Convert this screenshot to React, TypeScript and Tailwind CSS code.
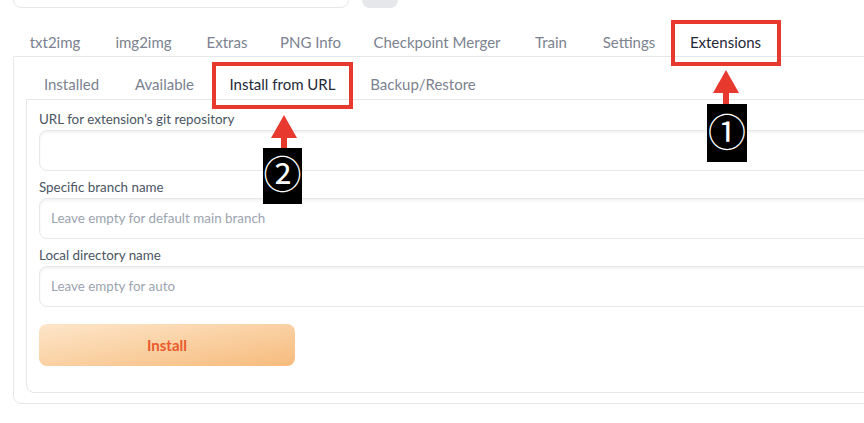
import React from "react";

const topTabs = [
  { label: "txt2img", w: "w-[84px]" },
  { label: "img2img", w: "w-[93px]" },
  { label: "Extras", w: "w-[74px]" },
  { label: "PNG Info", w: "w-[93px]" },
  { label: "Checkpoint Merger", w: "w-[160px]" },
  { label: "Train", w: "w-[68px]" },
  { label: "Settings", w: "w-[88px]" },
  { label: "Extensions", w: "w-[105px]", active: true },
];

const subTabs = [
  { label: "Installed", w: "w-[91px]" },
  { label: "Available", w: "w-[95px]" },
  { label: "Install from URL", w: "w-[141px]", active: true },
  { label: "Backup/Restore", w: "w-[140px]" },
];

const Field: React.FC<{ label: string; placeholder?: string; first?: boolean }> = (
  { label, placeholder, first },
) => (
  <div className={`flex flex-col gap-[1px] ${first ? "" : "mt-[6px]"}`}>
    <span className="text-[13.4px] leading-[20px] text-[#4b5563]">{label}</span>
    <div className="h-[41px] rounded-lg border border-[#e5e7eb] bg-white shadow-[inset_0_2px_3px_rgba(0,0,0,0.05)] flex items-center px-[11px]">
      {placeholder && (
        <span className="text-[13.4px] text-[#9ca3af]">{placeholder}</span>
      )}
    </div>
  </div>
);

const Arrow: React.FC = () => (
  <div className="flex flex-col items-center">
    <div className="w-0 h-0 border-l-[13px] border-r-[13px] border-b-[23px] border-l-transparent border-r-transparent border-b-[#e8392f]" />
    <div className="w-[6px] h-[11px] bg-[#e8392f]" />
  </div>
);

const Badge: React.FC<{ glyph: string }> = ({ glyph }) => (
  <span
    className="text-white text-[38px] leading-[44px]"
    style={{ fontFamily: "'Noto Sans CJK JP', sans-serif" }}
  >
    {glyph}
  </span>
);

export default function App() {
  return (
    <div
      className="relative w-[864px] h-[423px] overflow-hidden bg-white"
      style={{ fontFamily: "Lato, 'Noto Sans', sans-serif" }}
    >
      <div className="w-[920px]">
        {/* top bar remnant */}
        <div className="h-[8px] overflow-hidden flex items-end gap-[13px] pl-[13px]">
          <div className="w-[336px] h-[30px] rounded-lg border border-[#e5e7eb] bg-white shrink-0" />
          <div className="w-[36px] h-[30px] rounded-lg bg-[#e5e7eb] shrink-0" />
        </div>

        {/* top tabs */}
        <div className="h-[48px] flex items-end pl-[13px]">
          {topTabs.map((t) => (
            <div
              key={t.label}
              className={`${t.w} text-center text-[15px] leading-[22px] pb-[3px] ${t.active ? "text-[#1f2937]" : "text-[#7b8290]"}`}
            >
              {t.label}
            </div>
          ))}
        </div>

        {/* outer panel */}
        <div className="ml-[13px] border border-[#e5e7eb] rounded-b-lg px-[12px] pb-[10px]">
          <div className="h-[42px] flex items-end">
            {subTabs.map((t) => (
              <div
                key={t.label}
                className={`${t.w} text-center text-[15px] leading-[22px] pb-[4px] ${t.active ? "text-[#1f2937]" : "text-[#7b8290]"}`}
              >
                {t.label}
              </div>
            ))}
          </div>

          {/* inner panel */}
          <div className="border border-[#e5e7eb] rounded-b-lg px-[12px] pt-[9px] pb-[26px]">
            <Field label="URL for extension's git repository" first />
            <Field
              label="Specific branch name"
              placeholder="Leave empty for default main branch"
            />
            <Field label="Local directory name" placeholder="Leave empty for auto" />
            <button className="mt-[17px] w-[256px] h-[42px] rounded-lg bg-gradient-to-br from-[#fde6c9] to-[#f6bb7c] text-[#ea5a2c] font-bold text-[15px]">
              Install
            </button>
          </div>
        </div>
      </div>

      {/* annotation 1 */}
      <div className="absolute left-[671px] top-[20px] w-[110px] h-[46px] border-[4px] border-[#e8392f]" />
      <div className="absolute left-[713px] top-[70px]">
        <Arrow />
      </div>
      <div className="absolute left-[707px] top-[104px] w-[40px] h-[58px] bg-black flex justify-center pt-[4px]">
        <Badge glyph="①" />
      </div>

      {/* annotation 2 */}
      <div className="absolute left-[212px] top-[62px] w-[141px] h-[47px] border-[4px] border-[#e8392f]" />
      <div className="absolute left-[271px] top-[115px]">
        <Arrow />
      </div>
      <div className="absolute left-[263px] top-[148px] w-[39px] h-[56px] bg-black flex justify-center pt-[2px]">
        <Badge glyph="②" />
      </div>
    </div>
  );
}
